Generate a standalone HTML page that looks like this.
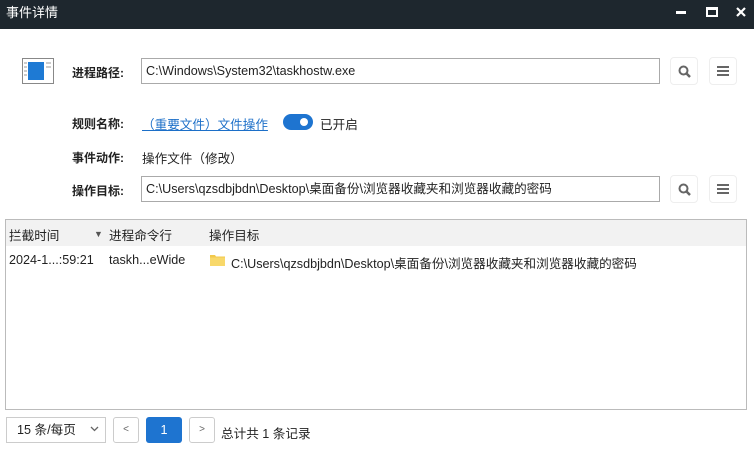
<!DOCTYPE html><html><head><meta charset="utf-8"><style>
*{box-sizing:border-box;margin:0;padding:0}
body{width:754px;height:449px;background:#fff;font-family:"Liberation Sans","Noto Sans CJK SC",sans-serif;font-size:12.6px;color:#222;position:relative;overflow:hidden}
.a{position:absolute}
.tb{left:0;top:0;width:754px;height:29px;background:#1e272e;color:#fff;font-size:13px;line-height:26px;padding-left:6px}
.lbl{font-weight:bold;font-size:12px}
.inp{border:1px solid #aaa;height:26px;line-height:24px;padding-left:4px;font-size:12.6px;background:#fff}
.btn{width:28px;height:28px;border:1px solid #eee;border-radius:4px}
.pb{border:1px solid #ccc;border-radius:3px;height:26px;text-align:center;line-height:24px;color:#666;font-size:10px}
</style></head><body>
<div class="a tb">事件详情</div>
<div class="a" style="left:676px;top:11px;width:10px;height:3px;background:#fff"></div>
<div class="a" style="left:706px;top:7px;width:12px;height:10px;border:2px solid #fff;border-top-width:3px"></div>
<svg class="a" style="left:736px;top:7px" width="10" height="10"><path d="M1 1l8 8M9 1l-8 8" stroke="#fff" stroke-width="2.2"/></svg>
<svg class="a" style="left:22px;top:58px" width="32" height="26"><rect x="0.5" y="0.5" width="31" height="25" fill="#fff" stroke="#888"/><rect x="6" y="4" width="16" height="18" fill="#1e7ad4"/><g stroke="#999"><line x1="2" y1="5" x2="5" y2="5"/><line x1="2" y1="9" x2="5" y2="9"/><line x1="2" y1="13" x2="5" y2="13"/><line x1="2" y1="17" x2="5" y2="17"/><line x1="24" y1="5" x2="29" y2="5"/><line x1="24" y1="9" x2="29" y2="9"/></g></svg>
<div class="a lbl" style="left:72px;top:64px">进程路径:</div>
<div class="a inp" style="left:141px;top:58px;width:519px">C:\Windows\System32\taskhostw.exe</div>
<div class="a btn" style="left:670px;top:57px"></div><div class="a btn" style="left:709px;top:57px"></div>
<svg class="a" style="left:678px;top:65px" width="14" height="14"><circle cx="5.5" cy="5.5" r="4" fill="none" stroke="#666" stroke-width="2"/><line x1="8.5" y1="8.5" x2="12" y2="12" stroke="#666" stroke-width="2.5"/></svg>
<svg class="a" style="left:716px;top:65px" width="14" height="12"><g stroke="#666" stroke-width="2"><line x1="1" y1="2" x2="13" y2="2"/><line x1="1" y1="6" x2="13" y2="6"/><line x1="1" y1="10" x2="13" y2="10"/></g></svg>
<div class="a lbl" style="left:72px;top:115px">规则名称:</div>
<div class="a" style="left:142px;top:114px;color:#1c6fc8;text-decoration:underline">（重要文件）文件操作</div>
<div class="a" style="left:283px;top:114px;width:30px;height:16px;border-radius:8px;background:#1e74d0"></div>
<div class="a" style="left:300px;top:118px;width:8px;height:8px;border-radius:4px;background:#fff"></div>
<div class="a" style="left:320px;top:114px">已开启</div>
<div class="a lbl" style="left:72px;top:149px">事件动作:</div>
<div class="a" style="left:142px;top:148px">操作文件（修改）</div>
<div class="a lbl" style="left:72px;top:182px">操作目标:</div>
<div class="a inp" style="left:141px;top:176px;width:519px">C:\Users\qzsdbjbdn\Desktop\桌面备份\浏览器收藏夹和浏览器收藏的密码</div>
<div class="a btn" style="left:670px;top:175px"></div><div class="a btn" style="left:709px;top:175px"></div>
<svg class="a" style="left:678px;top:183px" width="14" height="14"><circle cx="5.5" cy="5.5" r="4" fill="none" stroke="#666" stroke-width="2"/><line x1="8.5" y1="8.5" x2="12" y2="12" stroke="#666" stroke-width="2.5"/></svg>
<svg class="a" style="left:716px;top:183px" width="14" height="12"><g stroke="#666" stroke-width="2"><line x1="1" y1="2" x2="13" y2="2"/><line x1="1" y1="6" x2="13" y2="6"/><line x1="1" y1="10" x2="13" y2="10"/></g></svg>
<div class="a" style="left:5px;top:219px;width:742px;height:191px;border:1px solid #bbb"></div>
<div class="a" style="left:6px;top:220px;width:740px;height:26px;background:#f2f2f2"></div>
<div class="a" style="left:9px;top:225px">拦截时间</div>
<div class="a" style="left:94px;top:229px;font-size:9px;color:#555">▼</div>
<div class="a" style="left:109px;top:225px">进程命令行</div>
<div class="a" style="left:209px;top:225px">操作目标</div>
<div class="a" style="left:9px;top:253px">2024-1...:59:21</div>
<div class="a" style="left:109px;top:253px">taskh...eWide</div>
<svg class="a" style="left:210px;top:254px" width="15" height="12"><path d="M0 1h5l1 1.5h9V12H0z" fill="#f2c94c"/><rect x="0" y="3.5" width="15" height="8.5" fill="#f8d86a"/></svg>
<div class="a" style="left:231px;top:253px">C:\Users\qzsdbjbdn\Desktop\桌面备份\浏览器收藏夹和浏览器收藏的密码</div>
<div class="a" style="left:6px;top:417px;width:100px;height:26px;border:1px solid #ccc;line-height:24px;padding-left:10px">15 条/每页</div>
<svg class="a" style="left:90px;top:426px" width="9" height="6"><path d="M1 1l3.5 3.5L8 1" fill="none" stroke="#666" stroke-width="1.3"/></svg>
<div class="a pb" style="left:113px;top:417px;width:26px">&lt;</div>
<div class="a" style="left:146px;top:417px;width:36px;height:26px;border-radius:3px;background:#1e74d0;color:#fff;text-align:center;line-height:26px">1</div>
<div class="a pb" style="left:189px;top:417px;width:26px">&gt;</div>
<div class="a" style="left:221px;top:423px">总计共 1 条记录</div>
</body></html>
